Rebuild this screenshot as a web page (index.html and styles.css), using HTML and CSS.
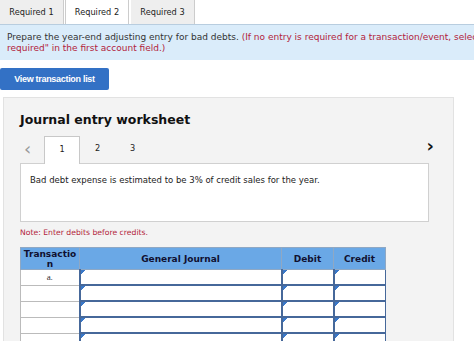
FILE: index.html
```html
<!DOCTYPE html>
<html lang="en">
<head>
    <meta charset="UTF-8">
    <title>Required 2</title>
    <link rel="stylesheet" href="styles.css">
</head>
<body>
    <nav class="tabs">
        <div class="tab">Required 1</div>
        <div class="tab active">Required 2</div>
        <div class="tab">Required 3</div>
    </nav>

    <div class="instructions">
        <p>Prepare the year-end adjusting entry for bad debts. <span class="red">(If no entry is required for a transaction/event, select "No journal entry</span><br><span class="red">required" in the first account field.)</span></p>
    </div>

    <div class="actions">
        <button class="view-button">View transaction list</button>
    </div>

    <section class="worksheet">
        <h2>Journal entry worksheet</h2>

        <div class="steps">
            <span class="arrow prev">&lsaquo;</span>
            <span class="step active">1</span>
            <span class="step">2</span>
            <span class="step">3</span>
            <span class="arrow next">&rsaquo;</span>
        </div>

        <div class="step-box">
            <p>Bad debt expense is estimated to be 3% of credit sales for the year.</p>
        </div>

        <p class="note">Note: Enter debits before credits.</p>

        <table class="journal">
            <thead>
                <tr>
                    <th class="col-trans">Transactio n</th>
                    <th class="col-account">General Journal</th>
                    <th class="col-amount">Debit</th>
                    <th class="col-amount">Credit</th>
                </tr>
            </thead>
            <tbody>
                <tr>
                    <td class="trans">a.</td>
                    <td class="entry"></td>
                    <td class="entry"></td>
                    <td class="entry"></td>
                </tr>
                <tr>
                    <td class="trans"></td>
                    <td class="entry"></td>
                    <td class="entry"></td>
                    <td class="entry"></td>
                </tr>
                <tr>
                    <td class="trans"></td>
                    <td class="entry"></td>
                    <td class="entry"></td>
                    <td class="entry"></td>
                </tr>
                <tr>
                    <td class="trans"></td>
                    <td class="entry"></td>
                    <td class="entry"></td>
                    <td class="entry"></td>
                </tr>
                <tr>
                    <td class="trans"></td>
                    <td class="entry"></td>
                    <td class="entry"></td>
                    <td class="entry"></td>
                </tr>
            </tbody>
        </table>
    </section>
</body>
</html>
```

FILE: styles.css
```css
body {
    margin: 0;
    font-family: "DejaVu Sans", Verdana, sans-serif;
    color: #333;
    background-color: #fff;
    overflow: hidden;
    height: 353px;
}
.tabs {
    display: flex;
    height: 24px;
}
.tab {
    width: 63px;
    margin-right: 2px;
    background-color: #eee;
    border-right: 1px solid #ccc;
    font-size: 8.2px;
    line-height: 24px;
    text-align: center;
    color: #222;
}
.tab.active {
    background-color: #fff;
    border-left: 1px solid #ccc;
    width: 62px;
    margin-left: -1px;
}
.instructions {
    background-color: #daecfa;
    border-top: 1px solid #b8cddf;
    height: 35px;
    overflow: hidden;
    white-space: nowrap;
}
.instructions p {
    margin: 0;
    padding: 7px 7px 0;
    font-size: 9px;
    line-height: 11px;
}
.red {
    color: #b2233a;
}
.actions {
    padding: 8px 0 7px;
}
.view-button {
    display: block;
    width: 109px;
    height: 22px;
    padding: 0;
    border: none;
    border-radius: 2px;
    background-color: #3371c5;
    color: #fff;
    font-family: "Liberation Sans", Arial, sans-serif;
    font-weight: bold;
    font-size: 9px;
    letter-spacing: -0.3px;
}
.worksheet {
    margin-left: 3px;
    width: 451px;
    height: 244px;
    background-color: #f3f3f3;
    border: 1px solid #e2e2e2;
    border-bottom: none;
    padding: 0 0 0 16px;
    box-sizing: border-box;
    overflow: hidden;
}
.worksheet h2 {
    margin: 0;
    padding-top: 14px;
    font-size: 12.5px;
    line-height: 16px;
    color: #111;
}
.steps {
    display: flex;
    align-items: flex-end;
    margin-top: 7px;
    height: 28px;
    position: relative;
    width: 409px;
}
.arrow {
    font-size: 18px;
    line-height: 20px;
    align-self: center;
}
.prev {
    color: #999;
    width: 24px;
    padding-left: 4px;
    box-sizing: border-box;
}
.next {
    position: absolute;
    right: -5px;
    top: 1px;
    color: #111;
    font-weight: bold;
}
.step {
    width: 35px;
    height: 27px;
    font-size: 8.2px;
    line-height: 24px;
    text-align: center;
    color: #222;
}
.step.active {
    background-color: #fff;
    border: 1px solid #c8c8c8;
    border-bottom: none;
    width: 34px;
    position: relative;
    top: 1px;
}
.step-box {
    width: 409px;
    height: 59px;
    background-color: #fff;
    border: 1px solid #d0d0d0;
    box-sizing: border-box;
}
.step-box p {
    margin: 0;
    padding: 11px 0 0 9px;
    font-size: 8.5px;
    color: #222;
}
.note {
    margin: 6px 0 9px;
    font-size: 7.7px;
    line-height: 10px;
    color: #b2233a;
}
.journal {
    border-collapse: collapse;
    width: 366px;
    font-size: 8px;
}
.journal th {
    background-color: #6aa8e6;
    border: 1px solid #8fa8c4;
    color: #101030;
    font-size: 9px;
    line-height: 10px;
    height: 21px;
    padding: 0;
}
.col-trans {
    width: 58px;
    word-break: break-all;
}
.col-amount {
    width: 51px;
}
.journal td {
    height: 14px;
    padding: 0;
    background-color: #fff;
}
.trans {
    border: 1px solid #bbb;
    text-align: center;
    font-family: "Liberation Serif", serif;
    font-size: 9px;
    color: #333;
}
.entry {
    border-left: 2px solid #46689a;
    border-right: 1px solid #46689a;
    border-bottom: 2px solid #46689a;
    background-image: linear-gradient(135deg, #3a78c8 3px, transparent 3px);
    background-repeat: no-repeat;
    background-size: 6px 6px;
}
```
